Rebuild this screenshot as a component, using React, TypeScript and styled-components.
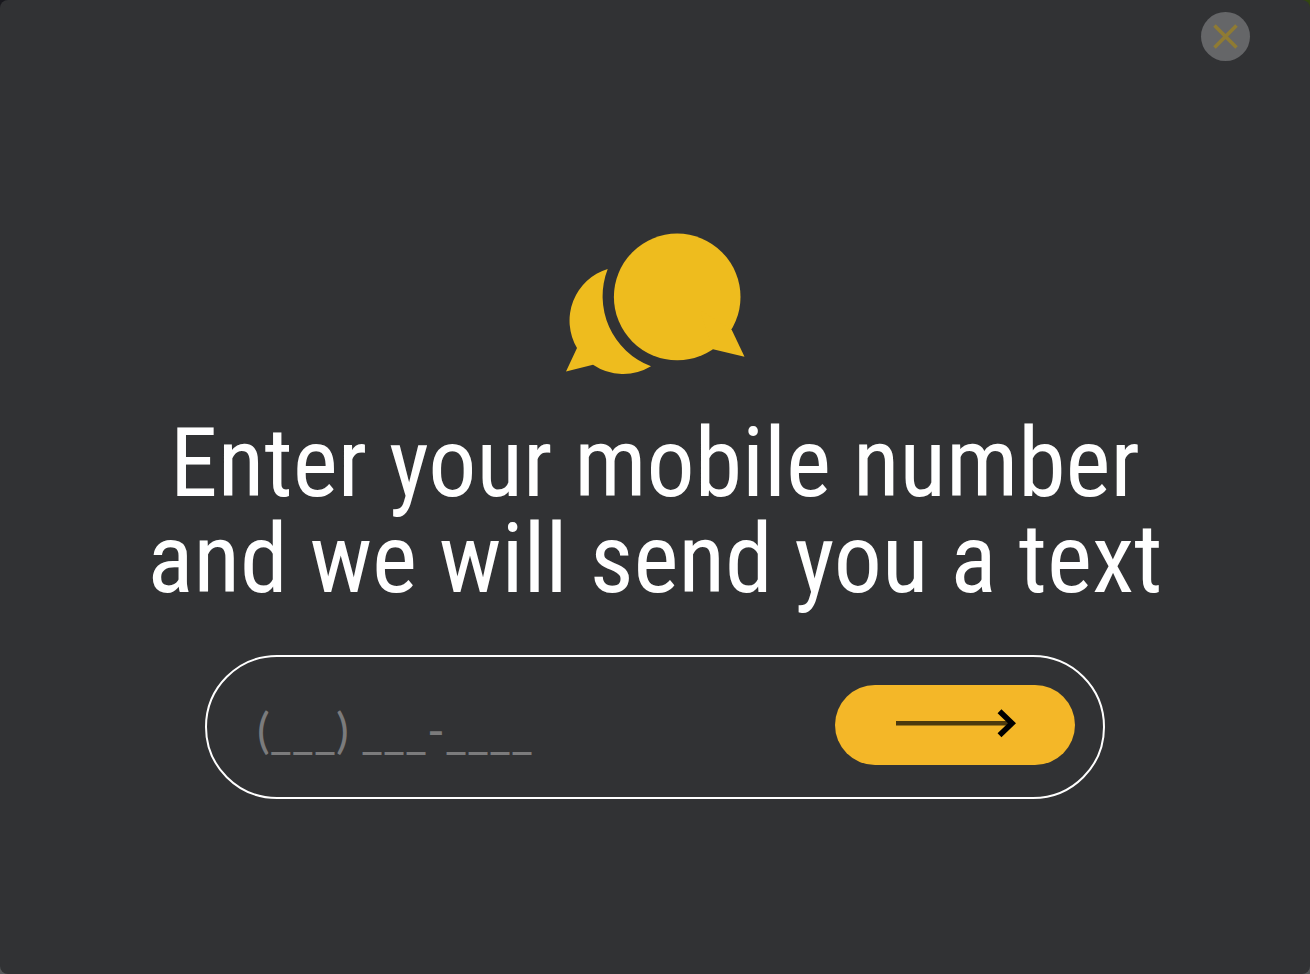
import React, { useState } from "react";
import styled, { createGlobalStyle } from "styled-components";

const GlobalStyle = createGlobalStyle`
  *, *::before, *::after { box-sizing: border-box; }
  body {
    margin: 0;
    background:
      radial-gradient(circle at 0 0, #18181d 0 40px, transparent 41px),
      radial-gradient(circle at 100% 0, #33470f 0 40px, transparent 41px),
      #55585a;
    font-family: "Roboto Condensed", Roboto, sans-serif;
  }
`;

const Dialog = styled.main`
  display: flex;
  flex-direction: column;
  min-height: 100vh;
  border-radius: 8px;
  background: #313234;
`;

const TopBar = styled.header`
  display: flex;
  justify-content: flex-end;
  padding: 12px 60px 0;
`;

const CloseButton = styled.button`
  display: grid;
  width: 49px;
  height: 49px;
  padding: 0;
  place-items: center;
  border: 0;
  border-radius: 50%;
  background: #656668;
  cursor: pointer;
`;

const Content = styled.section`
  display: flex;
  flex-direction: column;
  align-items: center;
  padding: 172px 24px 24px;
`;

const Title = styled.h1`
  margin: 40px 0 48px;
  color: #fff;
  font-size: 96px;
  font-weight: 400;
  line-height: 96px;
  text-align: center;
`;

const TitleLine = styled.span`
  display: block;
`;

const PhoneForm = styled.form`
  display: flex;
  align-items: center;
  width: 100%;
  max-width: 900px;
  height: 144px;
  padding: 0 28px 4px 50px;
  border: 2px solid #fff;
  border-radius: 72px;
`;

const PhoneInput = styled.input`
  flex: 1;
  min-width: 0;
  height: 80px;
  padding: 8px 0 0;
  border: 0;
  outline: 0;
  background: transparent;
  color: #fff;
  font-family: Lato, sans-serif;
  font-size: 48px;

  &::placeholder {
    color: #7b7b7c;
    opacity: 1;
  }
`;

const SendButton = styled.button`
  display: grid;
  flex: none;
  width: 240px;
  height: 80px;
  padding: 0 0 4px;
  place-items: center;
  border: 0;
  border-radius: 40px;
  background: #f4b728;
  cursor: pointer;
`;

export default function App() {
  const [phone, setPhone] = useState("");

  return (
    <>
      <GlobalStyle />
      <Dialog>
        <TopBar>
          <CloseButton type="button" aria-label="Close">
            <svg width="25" height="25" viewBox="0 0 25 25" fill="none" stroke="#8f7b33" strokeWidth="3.6">
              <path d="M1.5 1.5L23.5 23.5M23.5 1.5L1.5 23.5" />
            </svg>
          </CloseButton>
        </TopBar>
        <Content>
          <svg width="180" height="142" viewBox="565 233 180 142" fill="#eebc1e" aria-hidden="true">
            <path d="M607.7 269A54 54 0 0 0 577 348L566 371.5L593 364.7A54 54 0 0 0 651 366.3A75 75 0 0 1 607.7 269Z" />
            <circle cx="677.2" cy="296.9" r="63.3" />
            <path d="M700 310L731.8 330L744.5 356.8L713 349.2Z" />
          </svg>
          <Title>
            <TitleLine>Enter your mobile number</TitleLine>
            <TitleLine>and we will send you a text</TitleLine>
          </Title>
          <PhoneForm onSubmit={(e) => e.preventDefault()}>
            <PhoneInput
              type="tel"
              aria-label="Mobile number"
              placeholder="(___) ___-____"
              value={phone}
              onChange={(e) => setPhone(e.target.value)}
            />
            <SendButton type="submit" aria-label="Send">
              <svg width="122" height="30" viewBox="0 0 122 30" fill="none">
                <path d="M2 15.2H117" stroke="#4b390d" strokeWidth="4.4" />
                <path d="M105.5 3.3L118 15.2L105.5 27.3" stroke="#000" strokeWidth="5.6" />
              </svg>
            </SendButton>
          </PhoneForm>
        </Content>
      </Dialog>
    </>
  );
}
